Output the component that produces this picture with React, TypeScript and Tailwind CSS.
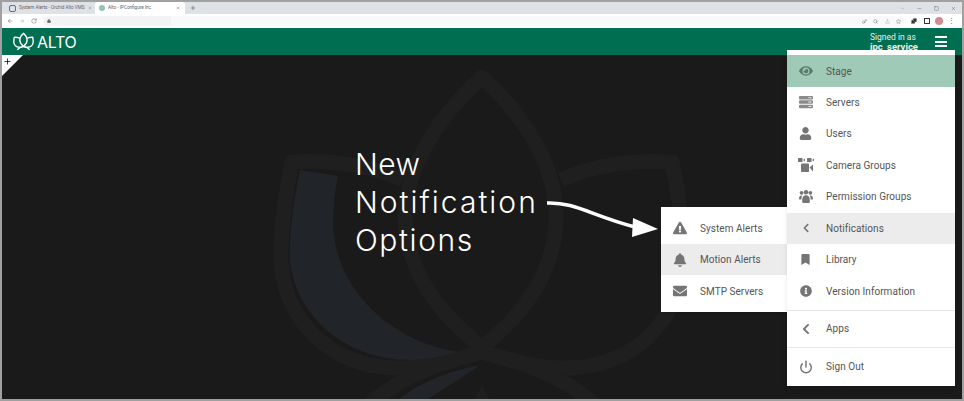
import React from 'react'
import { ArrowLeft, ArrowRight, ChevronDown, Key, Lock, Minus, Plus, Power, Puzzle, RotateCw, Search, Share, Square, Star, X } from 'lucide-react'
import { FaBell, FaBookmark, FaChevronLeft, FaEnvelope, FaExclamationTriangle, FaEye, FaInfoCircle, FaServer, FaUser } from 'react-icons/fa'

// same outline for the header logo and the big watermark
const LotusPaths = () => (
  <>
    <path d="M482 77C440 115 406 165 405 217C405 270 440 315 482 347C524 315 556 270 556 217C556 165 524 115 482 77Z" />
    <path d="M403 180C370 165 330 160 292 162C285 195 281 230 281 258C283 320 330 368 400 368C430 368 460 358 482 352C520 362 570 375 610 420" />
    <path d="M561 180C594 165 634 160 672 162C679 195 683 230 683 258C681 320 634 368 564 368C534 368 504 358 482 352C444 362 394 375 354 420" />
  </>
)

const CameraGroup = () => (
  <svg viewBox="0 0 16 14" className="w-[16px] h-[14px]" fill="currentColor">
    <rect x="0" y="0" width="4.5" height="4" rx="0.6" />
    <path d="M5 2L7 0.6V3.4Z" />
    <rect x="9" y="0" width="4.5" height="4" rx="0.6" />
    <path d="M14 2L16 0.6V3.4Z" />
    <rect x="3" y="5.5" width="8" height="8.5" rx="0.8" />
    <path d="M11.5 9.5L15 6.5V13.5Z" />
  </svg>
)

const PeopleGroup = () => (
  <svg viewBox="0 0 14 13" className="w-[14px] h-[13px]" fill="currentColor">
    <circle cx="2.6" cy="2.8" r="1.9" />
    <circle cx="11.4" cy="2.8" r="1.9" />
    <circle cx="7" cy="2.2" r="2.2" />
    <path d="M0 9C0 6.4 1 5.4 2.6 5.4C3 5.4 3.2 5.5 3.4 5.6C2.6 6.6 2.4 7.8 2.4 9.4H0.6C0.2 9.4 0 9.3 0 9Z" />
    <path d="M14 9C14 6.4 13 5.4 11.4 5.4C11 5.4 10.8 5.5 10.6 5.6C11.4 6.6 11.6 7.8 11.6 9.4H13.4C13.8 9.4 14 9.3 14 9Z" />
    <path d="M3.2 10C3.2 6.8 4.6 5.2 7 5.2C9.4 5.2 10.8 6.8 10.8 10V11.4C10.8 12.4 10.2 13 9.2 13H4.8C3.8 13 3.2 12.4 3.2 11.4Z" />
  </svg>
)

const MenuRow = ({ icon, label, className = 'h-[31.5px]' }: { icon: React.ReactNode; label: string; className?: string }) => (
  <div className={`flex items-center ${className}`}>
    <div className="w-[37px] mr-[2px] flex justify-center text-[#757575]">{icon}</div>
    <span className="text-[10px] tracking-[0.05px] text-[#555]">{label}</span>
  </div>
)

export default function App() {
  return (
    <div className="w-[964px] h-[401px] bg-[#a0a0a0] pt-[2px] px-[2px] pb-[2px] overflow-hidden font-['Roboto',sans-serif]">
      <div className="relative w-full h-full flex flex-col bg-[#1a1a1a] overflow-hidden">
        {/* browser tabs */}
        <div className="h-[12px] bg-[#dee1e6] flex items-end text-[#5f6368]">
          <div className="w-[93px] h-[12px] flex items-center pl-[7px] pr-[3px] gap-[3px]">
            <div className="w-[7px] h-[7px] rounded-[2px] border border-[#4b7a8c] shrink-0" />
            <span className="text-[4.6px] whitespace-nowrap flex-1">System Alerts - Orchid Alto VMS</span>
            <X size={4} />
          </div>
          <div className="w-[90px] h-[12px] bg-white rounded-t-[3px] flex items-center pl-[4px] pr-[5px] gap-[3px]">
            <div className="w-[6px] h-[6px] rounded-full bg-[#8fc5b3] shrink-0" />
            <span className="text-[4.6px] whitespace-nowrap flex-1">Alto - IPConfigure Inc.</span>
            <X size={4} className="text-[#333]" />
          </div>
          <Plus size={6} className="ml-[5px] mb-[3px] text-[#444]" />
          <div className="ml-auto flex items-center gap-[12px] pr-[6px] mb-[3px]">
            <ChevronDown size={5} className="text-[#999]" />
            <Minus size={5} />
            <Square size={5} />
            <X size={5} />
          </div>
        </div>
        {/* browser toolbar */}
        <div className="h-[14px] bg-white flex items-center pl-[5px] pr-[7px] text-[#666]">
          <ArrowLeft size={6} />
          <ArrowRight size={6} className="ml-[6px] text-[#aaa]" />
          <RotateCw size={6} className="ml-[6px]" />
          <div className="ml-[6px] w-[128px] h-[10px] rounded-l-full bg-[#f1f3f4] flex items-center pl-[4px]">
            <Lock size={4} fill="currentColor" />
          </div>
          <div className="flex-1 h-[10px] bg-[#f8f9fa] rounded-r-full flex items-center justify-end gap-[6.5px] pr-[4px]">
            <Key size={5} />
            <Search size={5} />
            <Share size={5} className="text-[#aaa]" />
            <Star size={5} />
          </div>
          <Puzzle size={6} className="ml-[5.5px] text-[#333]" fill="currentColor" />
          <div className="ml-[7px] w-[6px] h-[6px] border border-[#333]" />
          <div className="ml-[5px] w-[8px] h-[8px] rounded-full bg-[#d48a8e]" />
          <span className="ml-[5.5px] text-[7px] leading-none">⋮</span>
        </div>
        {/* header */}
        <div className="h-[27px] bg-[#006e51] flex items-center pl-[11px] pr-[15px] text-white">
          <svg viewBox="265 60 434 380" className="w-[21px] h-[19px]" fill="none" stroke="currentColor" strokeWidth="28" strokeLinejoin="round">
            <LotusPaths />
          </svg>
          <span className="ml-[3px] text-[16px] leading-none font-['Inter',sans-serif] tracking-[-0.3px]">ALTO</span>
          <div className="ml-auto text-[#e6f0ec] text-[8.5px] leading-[10px] mr-[17px]">
            <div>Signed in as</div>
            <div className="font-bold text-[9.5px]">ipc_service</div>
          </div>
          <div className="flex flex-col gap-[2.5px]">
            <div className="w-[12px] h-[2px] bg-white" />
            <div className="w-[12px] h-[2px] bg-white" />
            <div className="w-[12px] h-[2px] bg-white" />
          </div>
        </div>
        {/* stage */}
        <div className="relative flex-1">
          {/* watermark and arrow are drawn in page coordinates */}
          <svg viewBox="0 0 964 401" className="absolute left-[-2px] top-[-55px] w-[964px] h-[401px]" fill="none">
            <g stroke="#1f1f1f" strokeWidth="15" strokeLinejoin="round">
              <LotusPaths />
            </g>
            <path d="M300 170L338 176C334 195 333 210 333 227C336 270 360 305 395 328C415 341 435 348 458 352C440 357 425 360 410 360C345 360 295 315 290 260C289 230 294 200 300 170Z" fill="#212529" />
            <path d="M480 365C445 372 415 385 397 401H425C445 388 465 376 480 365Z" fill="#212529" />
            <path d="M482 385L474 401H490Z" fill="#1f1f1f" />
            <path d="M547 203C575 202 590 215 635 227" stroke="white" strokeWidth="3.5" />
            <path d="M633 218L658 229L632 237Z" fill="white" />
          </svg>

          <div className="absolute left-0 top-0 w-0 h-0 border-t-[21px] border-r-[21px] border-t-white border-r-transparent" />
          <Plus size={9} className="absolute left-[1px] top-[2px] text-black" />

          <div className="absolute left-[353px] top-[90px] text-white text-[30px] leading-[38px] font-['Inter',sans-serif] font-light">
            <div className="tracking-[0.4px]">New</div>
            <div className="tracking-[2px]">Notification</div>
            <div className="tracking-[1.6px]">Options</div>
          </div>

          {/* notifications submenu */}
          <div className="absolute left-[659px] top-[152px] w-[126px] h-[105px] bg-white pt-[5px] shadow-sm">
            <MenuRow className="h-[32px]" icon={<FaExclamationTriangle size={14} />} label="System Alerts" />
            <MenuRow className="h-[31px] bg-[#ececec]" icon={<FaBell size={14} />} label="Motion Alerts" />
            <MenuRow className="h-[32px]" icon={<FaEnvelope size={14} />} label="SMTP Servers" />
          </div>

          {/* main menu */}
          <div className="absolute left-[785px] top-[-5px] w-[168px] h-[336px] bg-white pt-[5px] shadow-md">
            <MenuRow className="h-[31.5px] pt-[1px] bg-[#9fcab7]" icon={<FaEye size={14} className="text-[#5b7a6d]" />} label="Stage" />
            <MenuRow icon={<FaServer size={14} className="text-[#8a8a8a]" />} label="Servers" />
            <MenuRow icon={<FaUser size={13} />} label="Users" />
            <MenuRow icon={<CameraGroup />} label="Camera Groups" />
            <MenuRow icon={<PeopleGroup />} label="Permission Groups" />
            <MenuRow className="h-[31.5px] bg-[#ececec]" icon={<FaChevronLeft size={10} />} label="Notifications" />
            <MenuRow icon={<FaBookmark size={11} />} label="Library" />
            <MenuRow icon={<FaInfoCircle size={12} />} label="Version Information" />
            <div className="mt-[3px] border-t border-[#e6e6e6]" />
            <MenuRow className="h-[36px] pb-[1px]" icon={<FaChevronLeft size={12} />} label="Apps" />
            <div className="border-t border-[#e6e6e6]" />
            <MenuRow className="h-[37px]" icon={<Power size={14} strokeWidth={2.5} />} label="Sign Out" />
          </div>
        </div>
      </div>
    </div>
  )
}
